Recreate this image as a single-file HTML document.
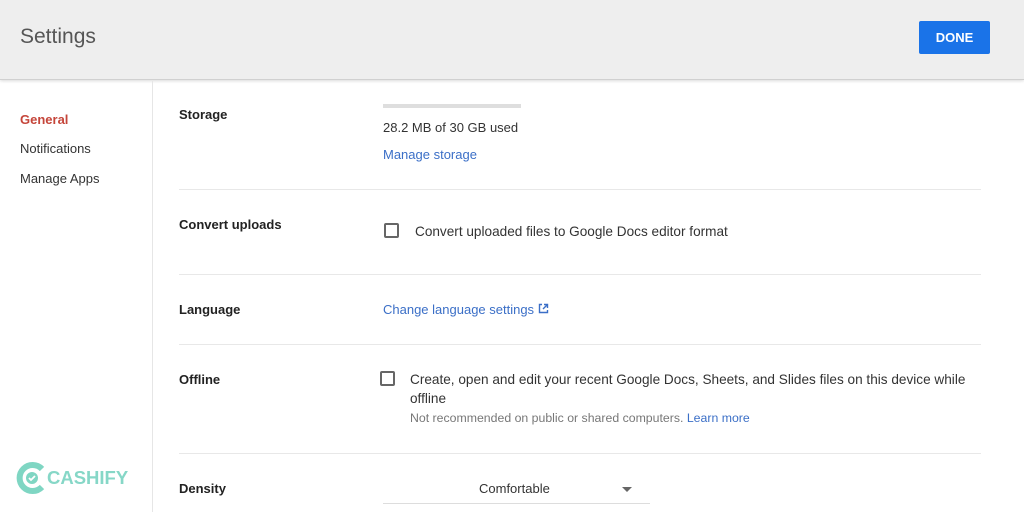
<!DOCTYPE html>
<html><head><style>
*{margin:0;padding:0;box-sizing:border-box}
body{width:1024px;height:512px;overflow:hidden;background:#fff;font-family:"Liberation Sans",Arial,sans-serif;color:#333;position:relative}
.a{position:absolute;white-space:nowrap}
.hdr{position:absolute;left:0;top:0;width:1024px;height:80px;background:#eeeeee;border-bottom:1px solid #d0d0d0;box-shadow:0 1px 3px rgba(0,0,0,.15)}
.lbl{font-size:13px;font-weight:bold;color:#222}
.t{font-size:13px;color:#333}
.w{font-size:13.6px}
.lnk{font-size:13px;color:#3b6fc7}
.hr{position:absolute;left:179px;width:802px;height:1px;background:#e8e8e8}
.cb{position:absolute;width:15px;height:15px;border:2px solid #666;border-radius:2px}
</style></head><body>
<div class="hdr"></div>
<div class="a" style="left:20px;top:25px;font-size:21px;color:#555">Settings</div>
<div class="a" style="left:919px;top:21px;width:71px;height:33px;background:#1a73e8;color:#fff;font-size:13px;font-weight:bold;text-align:center;line-height:33px;border-radius:2px">DONE</div>
<div style="position:absolute;left:152px;top:81px;width:1px;height:431px;background:#e6e6e6"></div>
<div class="a" style="left:20px;top:112px;font-size:13px;font-weight:bold;color:#c5453a">General</div>
<div class="a t" style="left:20px;top:141px">Notifications</div>
<div class="a t" style="left:20px;top:171px">Manage Apps</div>

<div class="a lbl" style="left:179px;top:107px">Storage</div>
<div style="position:absolute;left:383px;top:104px;width:138px;height:4px;background:#dedede"></div>
<div class="a t" style="left:383px;top:120px">28.2 MB of 30 GB used</div>
<div class="a lnk w" style="left:383px;top:147px">Manage storage</div>
<div class="hr" style="top:189px"></div>

<div class="a lbl" style="left:179px;top:217px">Convert uploads</div>
<div class="cb" style="left:384px;top:223px"></div>
<div class="a t w" style="left:415px;top:224px">Convert uploaded files to Google Docs editor format</div>
<div class="hr" style="top:274px"></div>

<div class="a lbl" style="left:179px;top:302px">Language</div>
<div class="a lnk w" style="left:383px;top:302px">Change language settings <svg width="11" height="11" viewBox="0 0 11 11" style="vertical-align:0"><path d="M4 1.5H1.5v8h8V7M6 1.5h3.5V5M9.5 1.5L5 6" fill="none" stroke="#3b6fc7" stroke-width="1.4"/></svg></div>
<div class="hr" style="top:344px"></div>

<div class="a lbl" style="left:179px;top:372px">Offline</div>
<div class="cb" style="left:380px;top:371px"></div>
<div class="a t w" style="left:410px;top:372px">Create, open and edit your recent Google Docs, Sheets, and Slides files on this device while</div>
<div class="a t w" style="left:410px;top:391px">offline</div>
<div class="a" style="left:410px;top:411px;font-size:12.3px;color:#777">Not recommended on public or shared computers. <span style="color:#3b6fc7">Learn more</span></div>
<div class="hr" style="top:453px"></div>

<div class="a lbl" style="left:179px;top:481px">Density</div>
<div class="a t" style="left:479px;top:481px">Comfortable</div>
<div style="position:absolute;left:622px;top:487px;border-left:5px solid transparent;border-right:5px solid transparent;border-top:5px solid #666"></div>
<div style="position:absolute;left:383px;top:503px;width:267px;height:1px;background:#ddd"></div>

<svg class="a" style="left:16px;top:461px" width="32" height="34" viewBox="0 0 32 34"><path d="M26 8A13 13 0 1 0 26 26" fill="none" stroke="#7fd6c3" stroke-width="6"/><circle cx="16" cy="17" r="6" fill="#7fd6c3"/><path d="M13 17l2 2 4-4" fill="none" stroke="#fff" stroke-width="1.8"/></svg>
<div class="a" style="left:47px;top:467px;font-size:18.5px;font-weight:bold;color:#86d7c7">CASHIFY</div>
</body></html>
